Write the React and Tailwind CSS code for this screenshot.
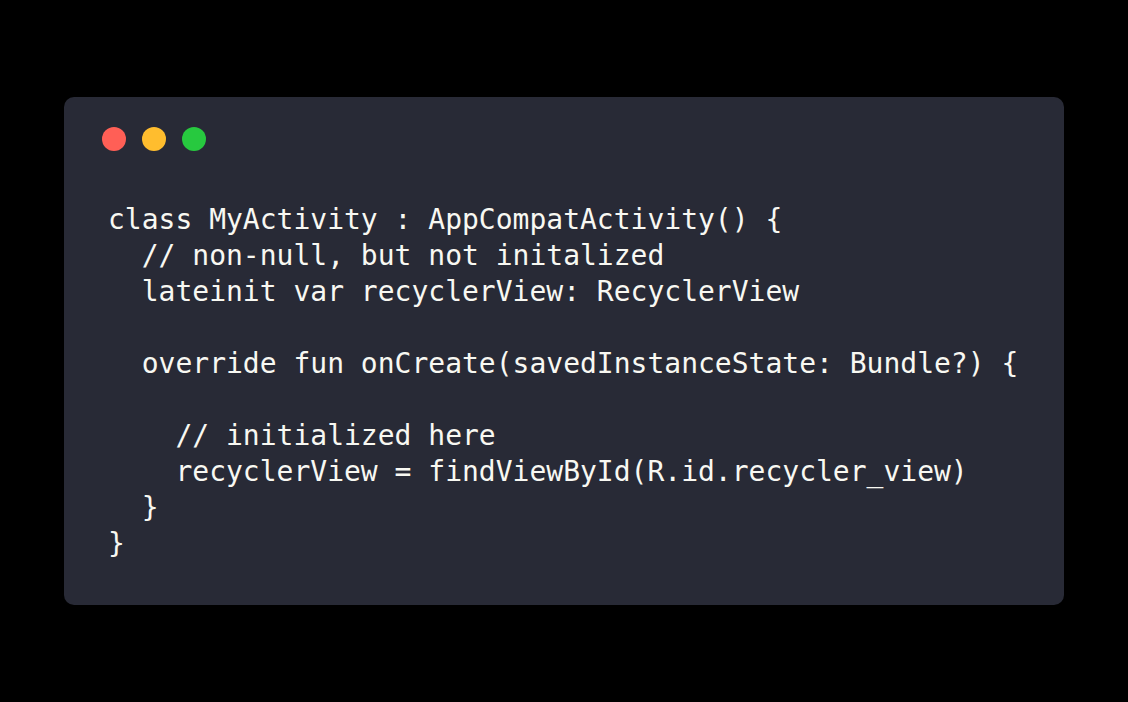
import React from "react";

const code = `class MyActivity : AppCompatActivity() {
  // non-null, but not initalized
  lateinit var recyclerView: RecyclerView

  override fun onCreate(savedInstanceState: Bundle?) {

    // initialized here
    recyclerView = findViewById(R.id.recycler_view)
  }
}`;

export default function App() {
  return (
    <div className="w-[1128px] h-[702px] bg-black flex items-center justify-center">
      <div className="w-[1000px] h-[508px] mt-[-1px] rounded-[10px] bg-[#282a36] pt-[105px] pl-[44px] relative">
        <div className="absolute top-[30px] left-[38px] flex gap-4">
          <span className="w-6 h-6 rounded-full bg-[#ff5f56]" />
          <span className="w-6 h-6 rounded-full bg-[#ffbd2e]" />
          <span className="w-6 h-6 rounded-full bg-[#27c93f]" />
        </div>
        <pre className="m-0 text-[28px] leading-[36px] text-[#f8f8f2] font-['DejaVu_Sans_Mono',monospace]">
          {code}
        </pre>
      </div>
    </div>
  );
}
